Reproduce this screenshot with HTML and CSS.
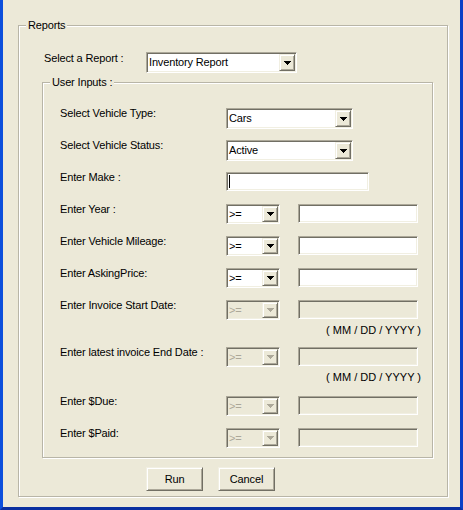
FILE: index.html
```html
<!DOCTYPE html>
<html>
<head>
<meta charset="utf-8">
<title>Reports</title>
<link rel="stylesheet" href="styles.css">
</head>
<body>
<div class="window">
  <fieldset class="group outer">
    <legend>Reports</legend>
    <div class="outer-body">
      <div class="report-row">
        <span class="report-label">Select a Report :</span>
        <div class="combo combo-report"><span class="combo-text">Inventory Report</span><span class="combo-btn"><svg class="arrow" width="7" height="4" viewBox="0 0 7 4"><path d="M0 0h7v1h-1v1h-1v1h-1v1h-1v-1h-1v-1h-1v-1h-1z"/></svg></span></div>
      </div>

      <fieldset class="group inner">
        <legend>User Inputs :</legend>
        <div class="inner-body">
          <div class="row">
            <span class="label">Select Vehicle Type:</span>
            <div class="combo combo-wide"><span class="combo-text">Cars</span><span class="combo-btn"><svg class="arrow" width="7" height="4" viewBox="0 0 7 4"><path d="M0 0h7v1h-1v1h-1v1h-1v1h-1v-1h-1v-1h-1v-1h-1z"/></svg></span></div>
          </div>
          <div class="row">
            <span class="label">Select Vehicle Status:</span>
            <div class="combo combo-wide"><span class="combo-text">Active</span><span class="combo-btn"><svg class="arrow" width="7" height="4" viewBox="0 0 7 4"><path d="M0 0h7v1h-1v1h-1v1h-1v1h-1v-1h-1v-1h-1v-1h-1z"/></svg></span></div>
          </div>
          <div class="row">
            <span class="label">Enter Make :</span>
            <div class="field field-make"><span class="caret"></span></div>
          </div>
          <div class="row">
            <span class="label">Enter Year :</span>
            <div class="combo combo-op"><span class="combo-text">&gt;=</span><span class="combo-btn"><svg class="arrow" width="7" height="4" viewBox="0 0 7 4"><path d="M0 0h7v1h-1v1h-1v1h-1v1h-1v-1h-1v-1h-1v-1h-1z"/></svg></span></div>
            <div class="field field-value"></div>
          </div>
          <div class="row">
            <span class="label">Enter Vehicle Mileage:</span>
            <div class="combo combo-op"><span class="combo-text">&gt;=</span><span class="combo-btn"><svg class="arrow" width="7" height="4" viewBox="0 0 7 4"><path d="M0 0h7v1h-1v1h-1v1h-1v1h-1v-1h-1v-1h-1v-1h-1z"/></svg></span></div>
            <div class="field field-value"></div>
          </div>
          <div class="row">
            <span class="label">Enter AskingPrice:</span>
            <div class="combo combo-op"><span class="combo-text">&gt;=</span><span class="combo-btn"><svg class="arrow" width="7" height="4" viewBox="0 0 7 4"><path d="M0 0h7v1h-1v1h-1v1h-1v1h-1v-1h-1v-1h-1v-1h-1z"/></svg></span></div>
            <div class="field field-value"></div>
          </div>
          <div class="row row-date">
            <span class="label">Enter Invoice Start Date:</span>
            <div class="combo combo-op disabled"><span class="combo-text">&gt;=</span><span class="combo-btn"><svg class="arrow" width="7" height="4" viewBox="0 0 7 4"><path d="M0 0h7v1h-1v1h-1v1h-1v1h-1v-1h-1v-1h-1v-1h-1z"/></svg></span></div>
            <div class="field field-value disabled"></div>
          </div>
          <div class="hint hint-first">( MM / DD / YYYY )</div>
          <div class="row row-date">
            <span class="label">Enter latest invoice End Date :</span>
            <div class="combo combo-op disabled"><span class="combo-text">&gt;=</span><span class="combo-btn"><svg class="arrow" width="7" height="4" viewBox="0 0 7 4"><path d="M0 0h7v1h-1v1h-1v1h-1v1h-1v-1h-1v-1h-1v-1h-1z"/></svg></span></div>
            <div class="field field-value disabled"></div>
          </div>
          <div class="hint">( MM / DD / YYYY )</div>
          <div class="row">
            <span class="label">Enter $Due:</span>
            <div class="combo combo-op disabled"><span class="combo-text">&gt;=</span><span class="combo-btn"><svg class="arrow" width="7" height="4" viewBox="0 0 7 4"><path d="M0 0h7v1h-1v1h-1v1h-1v1h-1v-1h-1v-1h-1v-1h-1z"/></svg></span></div>
            <div class="field field-value disabled"></div>
          </div>
          <div class="row row-last">
            <span class="label">Enter $Paid:</span>
            <div class="combo combo-op disabled"><span class="combo-text">&gt;=</span><span class="combo-btn"><svg class="arrow" width="7" height="4" viewBox="0 0 7 4"><path d="M0 0h7v1h-1v1h-1v1h-1v1h-1v-1h-1v-1h-1v-1h-1z"/></svg></span></div>
            <div class="field field-value disabled"></div>
          </div>
        </div>
      </fieldset>

      <div class="actions">
        <button class="btn" type="button">Run</button>
        <button class="btn" type="button">Cancel</button>
      </div>
    </div>
  </fieldset>
</div>
</body>
</html>
```

FILE: styles.css
```css
html, body {
  margin: 0;
  padding: 0;
  background: #ECE9D8;
}

.window {
  box-sizing: border-box;
  width: 463px;
  height: 510px;
  background: #ECE9D8;
  border-left: 3px solid #0C4FDC;
  border-right: 3px solid #0A3FC6;
  border-bottom: 3px solid #0A2FA0;
  padding: 19px 0 0 15px;
  font-family: "Liberation Sans", Arial, sans-serif;
  font-size: 11px;
  letter-spacing: -0.15px;
  color: #000;
}

/* etched group box */
.group {
  box-sizing: border-box;
  margin: 0;
  padding: 0;
  min-width: 0;
  border: 1px solid #B8B5A7;
  box-shadow: 1px 1px 0 #FFFFFF, inset 1px 1px 0 #FFFFFF;
}

.group legend {
  padding: 0 2px;
  margin-left: 7px;
  line-height: 13px;
  background: #ECE9D8;
}

.outer {
  width: 430px;
}

.outer-body {
  padding: 20px 0 5px 23px;
}

.report-row {
  display: flex;
  align-items: flex-start;
  height: 21px;
}

.report-label {
  width: 102px;
  margin-left: 2px;
  line-height: 13px;
}

.inner {
  width: 391px;
  margin-top: 3px;
}

.inner-body {
  padding: 19px 0 9px 17px;
}

.row {
  display: flex;
  align-items: flex-start;
  height: 20px;
  margin-bottom: 12px;
}

.row-date {
  margin-bottom: 4px;
}

.row-last {
  margin-bottom: 0;
}

.label {
  width: 166px;
  flex: none;
  margin-top: -1px;
  line-height: 13px;
  white-space: nowrap;
}

.hint {
  margin-left: 166px;
  width: 195px;
  height: 13px;
  line-height: 13px;
  text-align: right;
  white-space: nowrap;
  letter-spacing: 0;
  margin-bottom: 12px;
}

.hint-first {
  margin-bottom: 10px;
}

/* sunken combo box */
.combo {
  box-sizing: border-box;
  display: flex;
  height: 20px;
  padding: 1px;
  border: 1px solid;
  border-color: #ACA899 #FFFFFF #FFFFFF #ACA899;
  box-shadow: inset 1px 1px 0 #716F64, inset -1px -1px 0 #F1EFE2;
  background: #FFFFFF;
}

.combo-text {
  flex: 1;
  padding-left: 1px;
  line-height: 16px;
  white-space: nowrap;
  overflow: hidden;
}

.combo-btn {
  box-sizing: border-box;
  width: 16px;
  flex: none;
  display: flex;
  align-items: center;
  justify-content: center;
  border: 1px solid;
  border-color: #F1EFE2 #716F64 #716F64 #F1EFE2;
  box-shadow: inset 1px 1px 0 #FFFFFF, inset -1px -1px 0 #ACA899;
  background: #ECE9D8;
}

.arrow {
  display: block;
  shape-rendering: crispEdges;
  fill: #000;
}

.combo-report {
  width: 151px;
  height: 21px;
}

.combo-wide {
  width: 127px;
  height: 21px;
}

.combo-op {
  width: 54px;
}

.combo.disabled {
  background: #ECE9D8;
  color: #ACA899;
}

.combo.disabled .arrow {
  fill: #ACA899;
}

/* sunken text field */
.field {
  box-sizing: border-box;
  height: 19px;
  border: 1px solid;
  border-color: #ACA899 #FFFFFF #FFFFFF #ACA899;
  box-shadow: inset 1px 1px 0 #716F64, inset -1px -1px 0 #F1EFE2;
  background: #FFFFFF;
  display: flex;
  align-items: center;
}

.field.disabled {
  background: #ECE9D8;
}

.field-make {
  width: 143px;
}

.field-value {
  width: 120px;
  margin-left: 18px;
}

.caret {
  width: 1px;
  height: 13px;
  margin-left: 2px;
  background: #000;
}

/* push buttons */
.actions {
  display: flex;
  gap: 15px;
  margin-top: 9px;
  padding-left: 104px;
}

.btn {
  box-sizing: border-box;
  width: 57px;
  height: 24px;
  margin: 0;
  padding: 0;
  font-family: "Liberation Sans", Arial, sans-serif;
  font-size: 11px;
  letter-spacing: -0.15px;
  color: #000;
  background: #ECE9D8;
  border: 1px solid;
  border-color: #F1EFE2 #716F64 #716F64 #F1EFE2;
  box-shadow: inset 1px 1px 0 #FFFFFF, inset -1px -1px 0 #ACA899;
}
```
